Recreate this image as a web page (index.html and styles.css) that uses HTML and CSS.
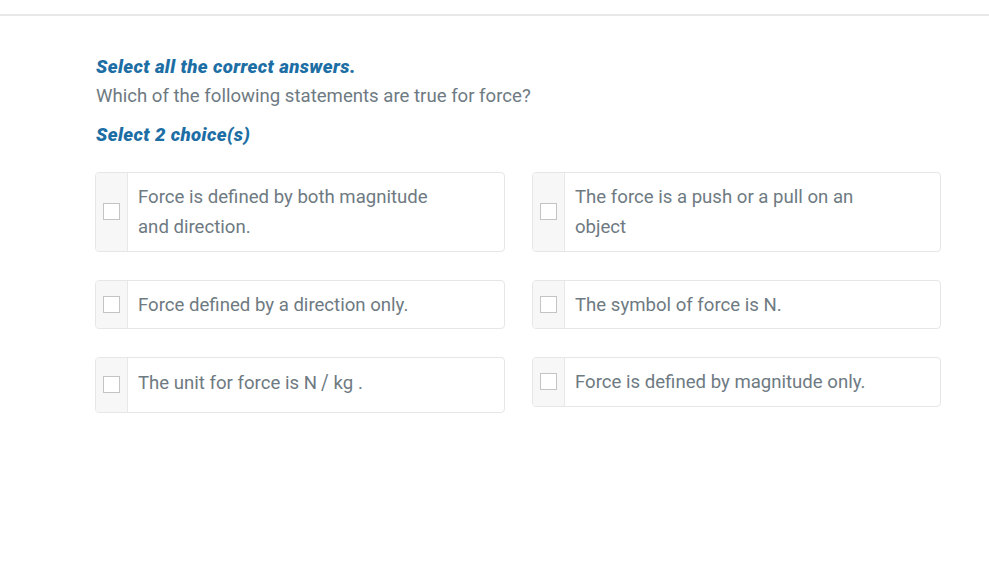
FILE: index.html
```html
<!DOCTYPE html>
<html>
<head>
<meta charset="utf-8">
<link rel="stylesheet" href="styles.css">
</head>
<body>
<div class="topbar"></div>
<main class="question">
  <p class="instruction">Select all the correct answers.</p>
  <p class="stem">Which of the following statements are true for force?</p>
  <p class="count">Select 2 choice(s)</p>
  <div class="choices">
    <label class="choice">
      <span class="box-col"><span class="box"></span></span>
      <span class="text">Force is defined by both magnitude<br>and direction.</span>
    </label>
    <label class="choice">
      <span class="box-col"><span class="box"></span></span>
      <span class="text">The force is a push or a pull on an<br>object</span>
    </label>
    <label class="choice">
      <span class="box-col"><span class="box"></span></span>
      <span class="text">Force defined by a direction only.</span>
    </label>
    <label class="choice">
      <span class="box-col"><span class="box"></span></span>
      <span class="text">The symbol of force is N.</span>
    </label>
    <label class="choice">
      <span class="box-col"><span class="box"></span></span>
      <span class="text math">The unit for force is N<span class="slash">/</span>kg .</span>
    </label>
    <label class="choice">
      <span class="box-col"><span class="box"></span></span>
      <span class="text">Force is defined by magnitude only.</span>
    </label>
  </div>
</main>
</body>
</html>
```
FILE: styles.css
```css
* { box-sizing: border-box; }
html, body { margin: 0; padding: 0; background: #fff; }
body {
  font-family: Roboto, "Open Sans", sans-serif;
  color: #6e7a82;
}
.topbar {
  height: 16px;
  border-bottom: 2px solid #e8e8e8;
}
.question {
  padding: 39px 48px 0 95px;
}
.instruction {
  margin: 0;
  padding-left: 1px;
  color: #1c6ea4;
  font-weight: 900;
  font-style: italic;
  font-size: 18.6px;
  letter-spacing: 0.4px;
  line-height: 24px;
}
.stem {
  margin: 4px 0 0;
  padding-left: 1px;
  font-size: 18.6px;
  line-height: 26px;
}
.count {
  margin: 14px 0 0;
  padding-left: 1px;
  color: #1c6ea4;
  font-weight: 900;
  font-style: italic;
  font-size: 18.6px;
  letter-spacing: 0.4px;
  line-height: 24px;
}
.choices {
  margin-top: 25px;
  display: grid;
  grid-template-columns: 410px 409px;
  column-gap: 27px;
  row-gap: 28px;
  align-items: start;
}
.choice {
  display: flex;
  border: 1px solid #e6e6e6;
  border-radius: 4px;
  background: #fff;
  overflow: hidden;
}
.box-col {
  flex: 0 0 32px;
  background: #f7f7f7;
  border-right: 1px solid #e8e8e8;
  display: flex;
  align-items: center;
  justify-content: center;
}
.box {
  width: 17px;
  height: 17px;
  border: 1px solid #c4c4c4;
  background: #fff;
}
.text {
  padding: 9px 10px 8px 10px;
  font-size: 18.6px;
  line-height: 30.4px;
}
.text.math {
  padding-top: 10px;
  padding-bottom: 13px;
}
.slash {
  display: inline-block;
  margin: 0 5px 0 4px;
  transform: scaleY(1.15);
}
```
